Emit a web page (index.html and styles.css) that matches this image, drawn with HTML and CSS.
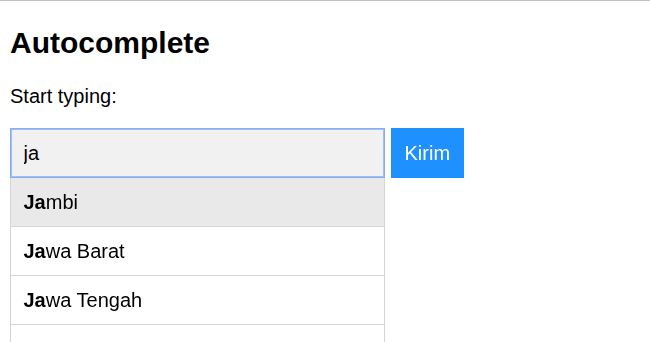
FILE: index.html
```html
<!DOCTYPE html>
<html>
<head>
  <title>Autocomplete</title>
  <meta name="viewport" content="width=device-width, initial-scale=1" />
  <link rel="stylesheet" href="styles.css">
</head>
<body>
  <h2>Autocomplete</h2>

  <p>Start typing:</p>

  <form class="search-form" autocomplete="off" action="">
    <div class="autocomplete">
      <input id="myInput" type="text" name="provinsi" value="ja" autofocus>
      <div class="autocomplete-items">
        <div class="active"><strong>Ja</strong>mbi</div>
        <div><strong>Ja</strong>wa Barat</div>
        <div><strong>Ja</strong>wa Tengah</div>
        <div class="last"><strong>Ja</strong>wa Timur</div>
      </div>
    </div>
    <input type="submit" value="Kirim">
  </form>

  <script>
    var box = document.getElementById("myInput");
    box.focus();
    box.setSelectionRange(2, 2);
  </script>
</body>
</html>
```

FILE: styles.css
```css
html {
  border-top: 1px solid #c2c2c2;
}

body {
  font-family: 'Liberation Sans', Arial, sans-serif;
  font-size: 20px;
  margin: 0 10px 10px;
  color: #000;
}

h2 {
  font-size: 30px;
  margin: 25px 0;
}

p {
  margin: 20px 0;
}

* {
  box-sizing: border-box;
}

.search-form {
  display: flex;
  align-items: flex-start;
  gap: 6px;
}

.autocomplete {
  width: 375px;
}

input {
  border: 1.25px solid transparent;
  background-color: #f1f1f1;
  padding: 12.5px;
  font-family: 'Liberation Sans', Arial, sans-serif;
  font-size: 20px;
  color: #000;
  height: 50px;
}

input[type=text] {
  display: block;
  width: 100%;
  border-color: #86adf2;
  outline: 1px solid #9fc0f7;
  outline-offset: -2px;
}

input[type=submit] {
  background-color: #1e90ff;
  color: #fff;
  cursor: pointer;
}

.autocomplete-items {
  border: 1.25px solid #d4d4d4;
  border-bottom: none;
  border-top: none;
}

.autocomplete-items div {
  padding: 12.5px;
  cursor: pointer;
  background-color: #fff;
  border-bottom: 1.25px solid #d4d4d4;
}

.autocomplete-items div.last {
  padding-top: 16px;
}

.autocomplete-items div.active {
  background-color: #e9e9e9;
}
```
